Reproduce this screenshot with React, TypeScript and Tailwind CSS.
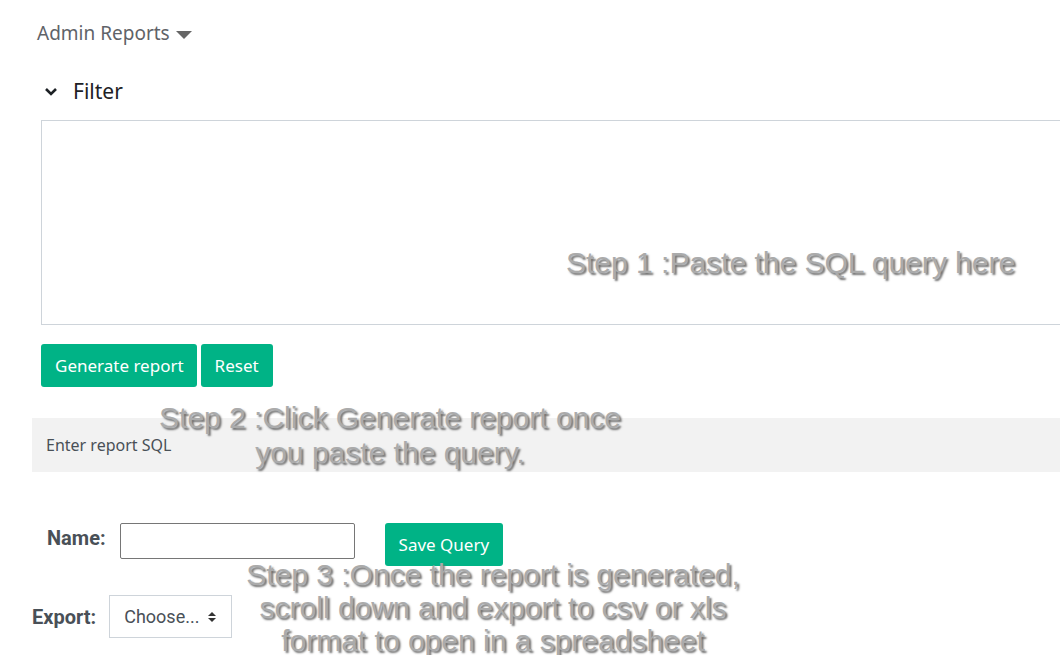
import React from "react";

const shadow = "text-[#ababab] [text-shadow:2px_2px_2px_#6f6f6f]";

export default function App() {
  return (
    <div className="relative w-[1060px] h-[655px] overflow-hidden bg-white font-['Noto_Sans',sans-serif]">
      <div className="flex flex-col">
        <div className="ml-[37px] mt-[19px] h-[28px] flex items-center text-[19px] text-[#5f6368]">
          <span>Admin Reports</span>
          <svg width="16" height="10" viewBox="0 0 16 10" className="ml-[6px] mt-[3px]">
            <path d="M0 1 L16 1 L8 9 Z" fill="#666" />
          </svg>
        </div>
        <div className="ml-[44px] mt-[31px] h-[28px] flex items-center text-[21px] text-[#1d2125]">
          <svg width="14" height="10" viewBox="0 0 14 10">
            <path d="M2 2 L7 7 L12 2" fill="none" stroke="#1d2125" strokeWidth="2.6" />
          </svg>
          <span className="ml-[15px]">Filter</span>
        </div>
        <div className="ml-[41px] mt-[14px] w-[1040px] h-[205px] border border-[#ced4da]" />
        <div className="ml-[41px] mt-[19px] flex gap-[4px]">
          <button className="h-[43px] pl-[14px] pr-[13px] rounded-[3px] bg-[#00b386] text-white text-[17px]">Generate report</button>
          <button className="h-[43px] px-[14px] rounded-[3px] bg-[#00b386] text-white text-[17px]">Reset</button>
        </div>
        <div className="ml-[32px] mt-[31px] h-[54px] bg-[#f2f2f2] flex items-center pl-[14px] text-[16px] text-[#495057]">
          Enter report SQL
        </div>
        <div className="mt-[51px] flex items-start font-['Roboto',sans-serif]">
          <label className="ml-[47px] text-[20px] font-bold text-[#495057]">Name:</label>
          <div className="ml-[14px] w-[235px] h-[36px] border border-[#767676] rounded-[2px]" />
          <button className="ml-[30px] h-[43px] px-[14px] rounded-[3px] bg-[#00b386] text-white text-[17px] font-['Noto_Sans',sans-serif]">Save Query</button>
        </div>
        <div className="mt-[29px] flex items-center font-['Roboto',sans-serif]">
          <label className="ml-[32px] text-[20px] font-bold text-[#495057]">Export:</label>
          <div className="ml-[13px] w-[123px] h-[43px] border border-[#ced4da] flex items-center pl-[14px] text-[18px] text-[#495057]">
            <span>Choose...</span>
            <svg width="8" height="12" viewBox="0 0 8 12" className="ml-[9px]">
              <path d="M0 5 L4 1 L8 5 Z M0 7 L4 11 L8 7 Z" fill="#333" />
            </svg>
          </div>
        </div>
      </div>

      <div className={`absolute left-[566px] top-[245px] text-[30px] leading-[36px] font-['Liberation_Sans',sans-serif] whitespace-nowrap ${shadow}`}>
        Step 1 :Paste the SQL query here
      </div>
      <div className={`absolute left-[140px] top-[400px] w-[500px] text-center text-[30px] leading-[35px] font-['Liberation_Sans',sans-serif] ${shadow}`}>
        Step 2 :Click Generate report once<br />you paste the query.
      </div>
      <div className={`absolute left-[223px] top-[558px] w-[540px] text-center text-[30px] leading-[33px] font-['Liberation_Sans',sans-serif] ${shadow}`}>
        Step 3 :Once the report is generated,<br />scroll down and export to csv or xls<br />format to open in a spreadsheet
      </div>
    </div>
  );
}
